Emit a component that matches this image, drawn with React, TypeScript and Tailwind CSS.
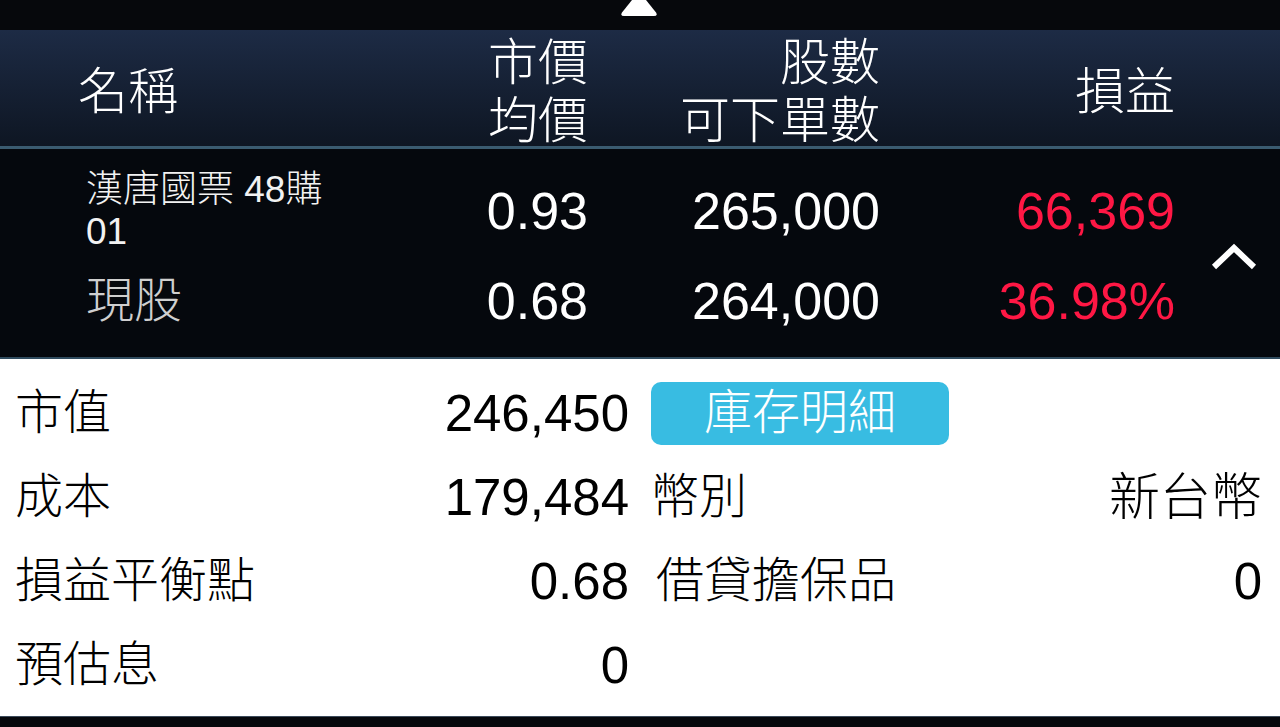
import React from "react";

const FONT = { fontFamily: '"Liberation Sans", "Noto Sans CJK TC", sans-serif' };

function TopArrow() {
  return (
    <svg width="36" height="16" viewBox="0 0 36 16" className="block">
      <path d="M11 0 H25 L35 12.5 Q37 16 33 16 H3 Q-1 16 1 12.5 Z" fill="#ffffff" />
    </svg>
  );
}

function ChevronUp() {
  return (
    <svg width="46" height="28" viewBox="0 0 46 28" className="block">
      <polyline points="3,25 23,6 43,25" fill="none" stroke="#ffffff" strokeWidth="6" />
    </svg>
  );
}

function InfoRow({ label, value, button }: { label?: string; value?: string; button?: boolean }) {
  if (button) {
    return (
      <div className="flex h-[84px] items-center">
        <button className="flex h-[63px] w-[298px] items-center justify-center rounded-[10px] bg-[#38bce2] text-[48px] font-light leading-none text-white">
          庫存明細
        </button>
      </div>
    );
  }
  return (
    <div className="flex h-[84px] items-center justify-between">
      <span className="text-[48px] font-light leading-none text-black">{label}</span>
      <span className="text-[51px] font-light leading-none text-black">{value}</span>
    </div>
  );
}

export default function App() {
  return (
    <div className="flex h-[727px] w-[1280px] flex-col overflow-hidden bg-[#06080c]" style={FONT}>
      {/* top strip */}
      <div className="flex h-[30px] justify-center bg-[#06080c]">
        <div className="ml-[-2px]">
          <TopArrow />
        </div>
      </div>

      {/* column header */}
      <div className="grid h-[119px] grid-cols-[420px_168px_292px_295px_1fr] items-center border-b-[3px] border-[#3a5b70] bg-linear-to-b from-[#1d2b45] to-[#0e1623] pt-[4px] text-[50px] font-light leading-[58px] text-white">
        <div className="pl-[78px]">名稱</div>
        <div className="text-right">
          <div>市價</div>
          <div>均價</div>
        </div>
        <div className="text-right">
          <div>股數</div>
          <div>可下單數</div>
        </div>
        <div className="text-right">損益</div>
        <div />
      </div>

      {/* position rows */}
      <div className="grid h-[210px] grid-cols-[420px_168px_292px_295px_1fr] grid-rows-[90px_90px] content-start border-b-2 border-[#2f4b5e] bg-[#05080d] pt-[17px] text-white">
        <div className="flex flex-col justify-center pl-[86px] text-[37px] font-light leading-[42px] text-[#f2f2f2]">
          <div>漢唐國票 48購</div>
          <div>01</div>
        </div>
        <div className="flex items-center justify-end text-[52px] leading-none">0.93</div>
        <div className="flex items-center justify-end text-[52px] leading-none">265,000</div>
        <div className="flex items-center justify-end text-[52px] leading-none text-[#ff1744]">66,369</div>
        <div className="row-span-2 flex items-center pl-[36px]">
          <ChevronUp />
        </div>

        <div className="flex items-center pl-[86px] text-[48px] font-light leading-none text-[#cfcfcf]">現股</div>
        <div className="flex items-center justify-end text-[52px] leading-none">0.68</div>
        <div className="flex items-center justify-end text-[52px] leading-none">264,000</div>
        <div className="flex items-center justify-end text-[52px] leading-none text-[#ff1744]">36.98%</div>
      </div>

      {/* summary */}
      <div className="grid h-[357px] grid-cols-[614px_611px] gap-x-[22px] bg-white pl-[15px] pt-[12px]">
        <div className="flex flex-col">
          <InfoRow label="市值" value="246,450" />
          <InfoRow label="成本" value="179,484" />
          <InfoRow label="損益平衡點" value="0.68" />
          <InfoRow label="預估息" value="0" />
        </div>
        <div className="flex flex-col">
          <InfoRow button />
          <InfoRow label="幣別" value="新台幣" />
          <div className="flex h-[84px] items-center justify-between pl-[5px]">
            <span className="text-[48px] font-light leading-none text-black">借貸擔保品</span>
            <span className="text-[51px] leading-none text-black">0</span>
          </div>
        </div>
      </div>

      {/* bottom strip */}
      <div className="flex-1 border-t border-[#3b4a5a] bg-[#06080c]" />
    </div>
  );
}
